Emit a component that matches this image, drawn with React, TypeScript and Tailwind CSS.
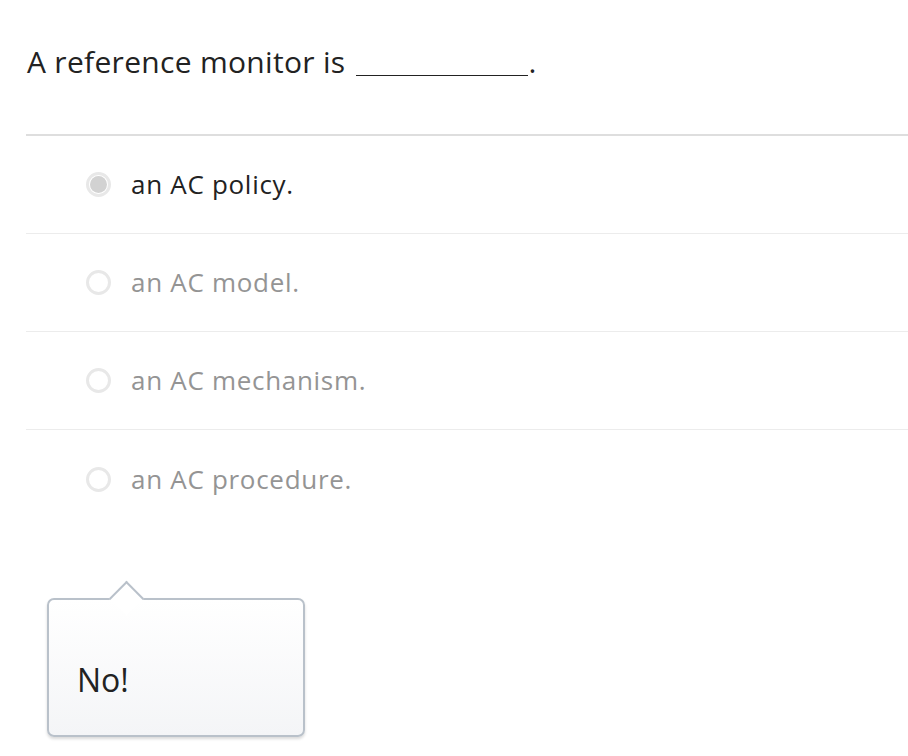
import React from "react";

const options = [
  { label: "an AC policy.", selected: true },
  { label: "an AC model.", selected: false },
  { label: "an AC mechanism.", selected: false },
  { label: "an AC procedure.", selected: false },
];

export default function App() {
  return (
    <div className="w-[908px] h-[756px] bg-white overflow-hidden" style={{ fontFamily: "'Open Sans', 'Noto Sans', sans-serif" }}>
      <div className="pl-[27px] pt-[42px] h-[40px] box-content">
        <h1 className="text-[30px] tracking-[0.3px] leading-[40px] text-[#222] font-normal flex items-baseline">
          <span>A reference monitor is</span>
          <span className="inline-block w-[172px] ml-[11px] border-b-[1.5px] border-[#222] self-end mb-[6px]" />
          <span>.</span>
        </h1>
      </div>
      <div className="ml-[26px] mt-[52px] border-t-2 border-[#dedede]">
        {options.map((o, i) => (
          <div
            key={i}
            className={`h-[98px] flex items-center pl-[60px] ${i < options.length - 1 ? "border-b border-[#ececec]" : ""}`}
          >
            <span className="w-[25px] h-[25px] rounded-full border-[3px] border-[#e8e8e8] flex items-center justify-center shrink-0">
              {o.selected && <span className="w-[17px] h-[17px] rounded-full bg-[#d2d2d2]" />}
            </span>
            <span className={`ml-[20px] text-[26px] tracking-[0.7px] ${o.selected ? "text-[#222]" : "text-[#949494]"}`}>{o.label}</span>
          </div>
        ))}
      </div>
      <div className="ml-[47px] mt-[70px] relative w-[258px] h-[139px]">
        <div className="absolute left-[67px] top-[-12px] w-[25px] h-[25px] rotate-45 border-l-2 border-t-2 border-[#b9c1ca] bg-white z-10" />
        <div className="w-full h-full rounded-[7px] border-2 border-[#b9c1ca] bg-gradient-to-b from-white to-[#f4f5f7] shadow-[0_2px_3px_rgba(0,0,0,0.15)] flex items-center pl-[28px] pt-[24px]">
          <span className="text-[32px] text-[#222]">No!</span>
        </div>
      </div>
    </div>
  );
}
